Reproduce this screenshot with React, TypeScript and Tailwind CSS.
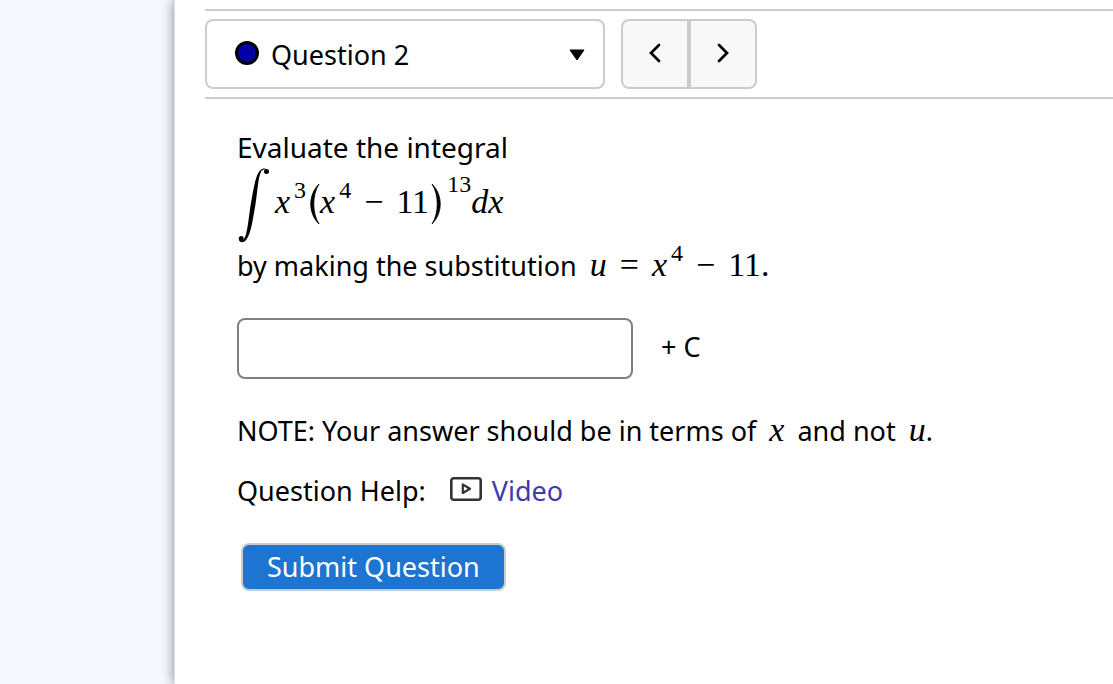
import React, { useState } from 'react';

interface MathProps {
  children: React.ReactNode;
}

const questions = ['Question 1', 'Question 2', 'Question 3'];

function Var({ children }: MathProps) {
  return <i className="font-['Liberation_Serif',serif] text-[34px] leading-none">{children}</i>;
}

function Num({ children }: MathProps) {
  return <span className="font-['Liberation_Serif',serif] text-[34px] leading-none">{children}</span>;
}

function Operator({ children }: MathProps) {
  return <span className="mx-[13px] font-['Liberation_Serif',serif] text-[34px] leading-none">{children}</span>;
}

function Power({ children, tall = false }: MathProps & { tall?: boolean }) {
  return (
    <sup
      className={`static ml-1 font-['Liberation_Serif',serif] text-2xl leading-none ${
        tall ? 'align-[21px]' : 'align-[15px]'
      }`}
    >
      {children}
    </sup>
  );
}

function Integral() {
  return (
    <svg viewBox="0 0 32 76" className="mr-1.5 inline-block h-[76px] w-8 align-[-30px]" role="img" aria-label="integral">
      <path d="M31 5C30.500 1.500 26.500 0 23.500 3C18.500 8 16.500 22 13.800 37C11.500 51 10.500 67 7 72C5.500 74.300 3.500 74 2.500 72L2 73C3 76 6.500 76 9 73C14 67 15.500 54 18.200 39C20.500 26 21 9 24.500 4C26 1.800 28.500 2 29.500 4Z" />
      <circle cx="29.500" cy="4.500" r="2.500" />
      <circle cx="4.200" cy="71.500" r="2.500" />
    </svg>
  );
}

function Paren({ close = false }: { close?: boolean }) {
  return (
    <svg viewBox="0 0 12 42" className="ml-0.5 inline-block h-[42px] w-3 align-[-12px]" aria-hidden="true">
      <path
        d={close ? 'M1 1C12 12 12 30 1 41C8 30 8 12 1 1Z' : 'M11 1C0 12 0 30 11 41C4 30 4 12 11 1Z'}
        stroke="#000"
        strokeWidth="0.800"
      />
    </svg>
  );
}

export default function App() {
  const [current, setCurrent] = useState(1);
  const [answer, setAnswer] = useState('');

  const step = (amount: number) => {
    setCurrent(Math.min(questions.length - 1, Math.max(0, current + amount)));
  };

  return (
    <div className="flex min-h-screen bg-[#f6f7ff] font-['Noto_Sans',sans-serif] text-[27px] leading-10 text-black">
      <div className="w-[174px] shrink-0" />
      <main className="min-w-0 flex-1 border-l border-[#ddd] bg-white pt-[9px] pl-[30px] shadow-[0_0_12px_rgba(0,0,0,0.45)]">
        <nav className="flex gap-4 border-y-2 border-[#ccc] py-2">
          <label className="flex h-[70px] w-[400px] items-center rounded-lg border-2 border-[#ccc] pt-0.5 pr-[18px] pl-7">
            <span className="mb-1 size-6 shrink-0 rounded-full border-[3px] border-black bg-[#0000a6]" />
            <select
              aria-label="Question"
              value={current}
              onChange={(e) => setCurrent(Number(e.target.value))}
              className="ml-3 min-w-0 flex-1 appearance-none bg-transparent outline-none"
            >
              {questions.map((question, i) => (
                <option key={question} value={i}>
                  {question}
                </option>
              ))}
            </select>
            <svg viewBox="0 0 16 12" className="h-3 w-4 shrink-0" aria-hidden="true">
              <path d="M1 1H15L8 11Z" stroke="#000" strokeLinejoin="round" />
            </svg>
          </label>
          <div className="flex">
            <button
              type="button"
              aria-label="Previous question"
              onClick={() => step(-1)}
              className="flex h-[70px] w-[68px] items-center justify-center rounded-l-lg border-2 border-[#ccc] bg-[#f8f8f8] pb-0.5"
            >
              <svg viewBox="0 0 12 20" className="h-5 w-3" fill="none" stroke="#000" strokeWidth="2.700" strokeLinecap="round">
                <path d="M10 2L2 10L10 18" />
              </svg>
            </button>
            <button
              type="button"
              aria-label="Next question"
              onClick={() => step(1)}
              className="flex h-[70px] w-[68px] items-center justify-center rounded-r-lg border-2 border-[#ccc] bg-[#f8f8f8] pb-0.5"
            >
              <svg viewBox="0 0 12 20" className="h-5 w-3" fill="none" stroke="#000" strokeWidth="2.700" strokeLinecap="round">
                <path d="M2 2L10 10L2 18" />
              </svg>
            </button>
          </div>
        </nav>

        <section className="pt-7 pl-8">
          <p className="text-[28px]">Evaluate the integral</p>
          <div className="whitespace-nowrap">
            <Integral />
            <Var>x</Var>
            <Power>3</Power>
            <Paren />
            <Var>x</Var>
            <Power>4</Power>
            <Operator>−</Operator>
            <Num>11</Num>
            <Paren close />
            <Power tall>13</Power>
            <Var>dx</Var>
          </div>
          <p className="-mt-0.5">
            <label htmlFor="answer" className="mr-1.5">by making the substitution </label>
            <Var>u</Var>
            <Operator>=</Operator>
            <Var>x</Var>
            <Power>4</Power>
            <Operator>−</Operator>
            <Num>11.</Num>
          </p>
          <div className="mt-8 flex items-center gap-7">
            <input
              id="answer"
              type="text"
              value={answer}
              onChange={(e) => setAnswer(e.target.value)}
              className="h-[61px] w-[396px] rounded-lg border-2 border-[#808080] bg-white px-3 outline-none"
            />
            <span className="pb-1">+ C</span>
          </div>
          <p className="mt-8">
            NOTE: Your answer should be in terms of{' '}
            <span className="mx-1.5">
              <Var>x</Var>
            </span>{' '}
            and not{' '}
            <span className="ml-1.5">
              <Var>u</Var>
            </span>
            .
          </p>
          <div className="mt-5 flex items-center">
            <span>Question Help:</span>
            <a href="#video" className="ml-6 flex items-center gap-2.5 text-[#3f3aad]">
              <svg viewBox="0 0 32 24" className="mb-1 h-6 w-8" fill="none" stroke="#333" strokeWidth="2.600" strokeLinejoin="round">
                <rect x="1.300" y="1.300" width="29.400" height="21.400" rx="2.500" />
                <path d="M12.800 7.500V16L20 11.700Z" strokeWidth="2.200" />
              </svg>
              Video
            </a>
          </div>
          <button
            type="button"
            className="mt-8 ml-1 flex h-12 items-center rounded-lg border-2 border-[#ccc] bg-[#1e74d1] px-6 text-white"
          >
            Submit Question
          </button>
        </section>
      </main>
    </div>
  );
}
